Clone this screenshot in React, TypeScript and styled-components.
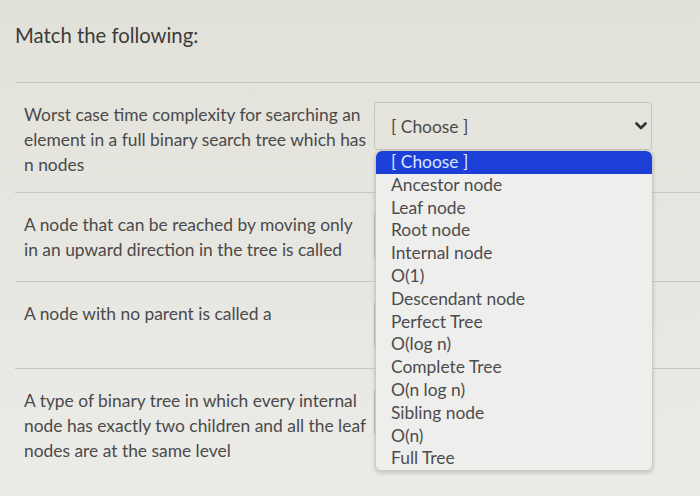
import styled, { createGlobalStyle } from "styled-components";

const GlobalStyle = createGlobalStyle`
  html, body {
    margin: 0;
    padding: 0;
  }
  body {
    width: 700px;
    height: 496px;
    overflow: hidden;
    background: linear-gradient(180deg, #e2e1d9 0%, #e6e5df 40%, #ebebe8 100%);
    font-family: Lato, "Open Sans", sans-serif;
    color: #4a4a4a;
  }
`;

const questions = [
  "Worst case time complexity for searching an element in a full binary search tree which has n nodes",
  "A node that can be reached by moving only in an upward direction in the tree is called",
  "A node with no parent is called a",
  "A type of binary tree in which every internal node has exactly two children and all the leaf nodes are at the same level",
];

const options = [
  "[ Choose ]",
  "Ancestor node",
  "Leaf node",
  "Root node",
  "Internal node",
  "O(1)",
  "Descendant node",
  "Perfect Tree",
  "O(log n)",
  "Complete Tree",
  "O(n log n)",
  "Sibling node",
  "O(n)",
  "Full Tree",
];

export default function App() {
  return (
    <Page>
      <GlobalStyle />
      <Title>Match the following:</Title>
      <List>
        {questions.map((q, i) => (
          <Row key={i}>
            <Question>{q}</Question>
            <SelectWrap>
              {/* rows below the open list sit hidden under it */}
              <Select>
                {i === 0 && (
                  <>
                    <span>[ Choose ]</span>
                    <Chevron viewBox="0 0 12 8">
                      <polyline points="1.5,1.5 6,6 10.5,1.5" />
                    </Chevron>
                  </>
                )}
              </Select>
              {i === 0 && (
                <Menu>
                  {options.map((o, j) => (
                    <Option key={o} $active={j === 0}>
                      {o}
                    </Option>
                  ))}
                </Menu>
              )}
            </SelectWrap>
          </Row>
        ))}
      </List>
    </Page>
  );
}

const Page = styled.div`
  padding-left: 15px;
`;

const Title = styled.h1`
  margin: 0;
  height: 83px;
  padding-top: 23px;
  box-sizing: border-box;
  font-size: 20.3px;
  font-weight: 400;
  color: #3b3b3b;
  border-bottom: 1px solid #c4c3bd;
`;

const List = styled.div`
  display: flex;
  flex-direction: column;
`;

const Row = styled.div`
  display: flex;
  align-items: flex-start;
  padding: 19px 0 19px 9px;
  border-bottom: 1px solid #c8c7c2;
  &:first-child {
    padding-bottom: 15px;
  }
  &:last-child {
    border-bottom: none;
  }
`;

const Question = styled.div`
  width: 345px;
  margin-right: 5px;
  font-size: 17.4px;
  line-height: 25px;
`;

const SelectWrap = styled.div`
  position: relative;
  width: 278px;
`;

const Select = styled.div`
  height: 48px;
  box-sizing: border-box;
  border: 1px solid #c6c5bf;
  border-radius: 3px;
  display: flex;
  align-items: center;
  justify-content: space-between;
  padding: 0 4px 0 16px;
  font-size: 17.4px;
  color: #4a4a4a;
`;

const Chevron = styled.svg`
  width: 12px;
  height: 8px;
  fill: none;
  stroke: #333;
  stroke-width: 2.6;
  stroke-linecap: round;
  stroke-linejoin: round;
`;

const Menu = styled.div`
  position: absolute;
  top: 48px;
  left: 1px;
  width: 276px;
  background: #eeeeec;
  border: 1px solid #c9c9c6;
  border-radius: 6px;
  box-shadow: 0 2px 4px rgba(0, 0, 0, 0.18);
  overflow: hidden;
  z-index: 2;
`;

const Option = styled.div<{ $active?: boolean }>`
  height: 22.8px;
  line-height: 22.8px;
  padding-left: 15px;
  font-size: 17.4px;
  color: ${(p) => (p.$active ? "#dde5ff" : "#4c4c4c")};
  background: ${(p) => (p.$active ? "#1c3fd8" : "transparent")};
  border-radius: ${(p) => (p.$active ? "6px 6px 0 0" : "0")};
`;
